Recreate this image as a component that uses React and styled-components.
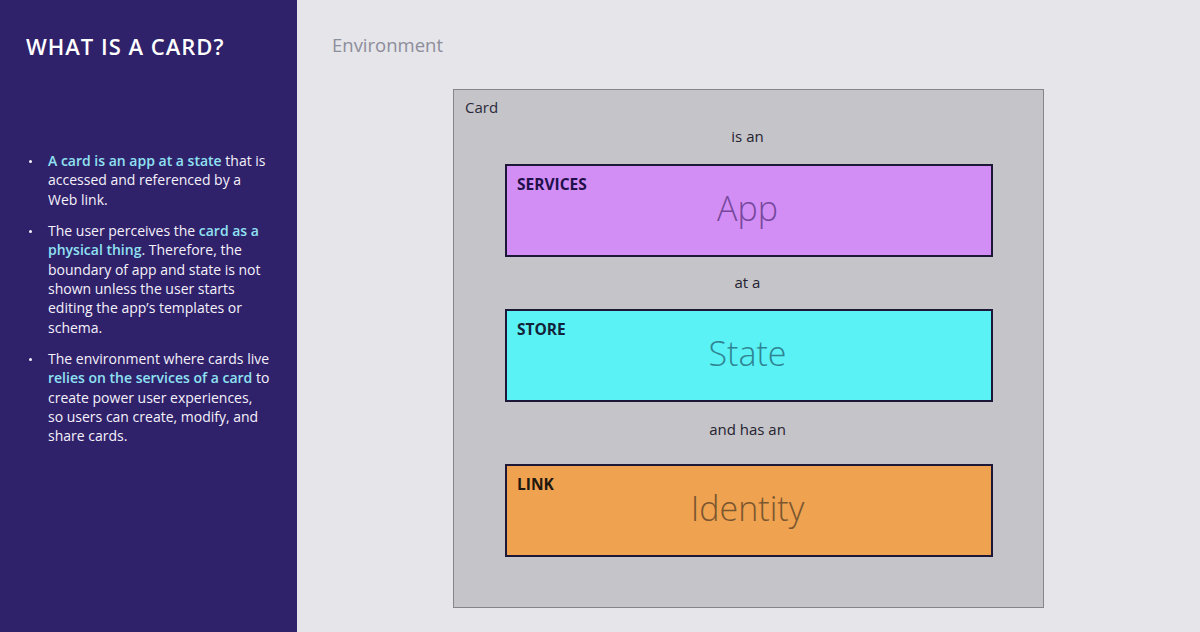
import React from 'react';
import styled, { createGlobalStyle } from 'styled-components';

const Global = createGlobalStyle`
    html, body {
        margin: 0;
        height: 632px;
        overflow: hidden;
        font-family: "Open Sans", "Liberation Sans", sans-serif;
    }
`;

const Page = styled.div`
    display: flex;
    width: 1200px;
    height: 632px;
    background: #e5e5ea;
`;

const Sidebar = styled.aside`
    box-sizing: border-box;
    flex: 0 0 297px;
    padding: 32px 0 0 26px;
    background: #30216b;
    color: #f4f2fa;
`;

const Heading = styled.h1`
    margin: 0 0 90px;
    font-size: 22px;
    line-height: 29px;
    font-weight: 600;
    letter-spacing: 1px;
    color: #fff;
`;

const Points = styled.ul`
    margin: 0;
    padding: 0 0 0 22px;
    list-style: none;
`;

const Point = styled.li`
    position: relative;
    margin-bottom: 11.6px;
    font-size: 14px;
    line-height: 19.4px;
    &::before {
        content: '';
        position: absolute;
        left: -19px;
        top: 9px;
        width: 3px;
        height: 3px;
        border-radius: 50%;
        background: #f4f2fa;
    }
`;

const Mark = styled.span`
    color: #8fe2f2;
    font-weight: 600;
`;

const Main = styled.main`
    flex: 1;
    padding: 32px 0 0 35px;
`;

const Environment = styled.div`
    margin-bottom: 32px;
    font-size: 18.5px;
    line-height: 25px;
    color: #8d8d9b;
`;

const Card = styled.section`
    box-sizing: border-box;
    width: 591px;
    height: 519px;
    margin-left: 121px;
    padding: 6px 50px 0 51px;
    background: #c4c4c9;
    border: 1px solid #85858c;
`;

const CardName = styled.div`
    margin: 0 0 1px -40px;
    font-size: 15px;
    line-height: 22px;
    color: #2c2a3a;
`;

const Joiner = styled.div`
    height: ${p => p.$height}px;
    padding: ${p => p.$top}px 3px 0 0;
    box-sizing: border-box;
    text-align: center;
    font-size: 15px;
    line-height: 20px;
    color: #24222f;
`;

const Layer = styled.div`
    box-sizing: border-box;
    height: 93px;
    padding: 8px 10px 0;
    background: ${p => p.$bg};
    border: 2px solid #1d1838;
`;

const LayerLabel = styled.div`
    font-size: 15.5px;
    line-height: 20px;
    font-weight: 700;
    color: ${p => p.$color};
`;

const LayerTitle = styled.div`
    margin-top: -6px;
    padding-right: 3px;
    text-align: center;
    font-size: 34px;
    line-height: 40px;
    font-weight: 300;
    color: ${p => p.$color};
`;

const layers = [
    { joiner: 'is an', height: 45, top: 7, bg: '#d38ef5', label: 'SERVICES', labelColor: '#21104a', title: 'App', titleColor: '#76489c' },
    { joiner: 'at a', height: 52, top: 15, bg: '#5af2f5', label: 'STORE', labelColor: '#13233a', title: 'State', titleColor: '#2f8492' },
    { joiner: 'and has an', height: 62, top: 17, bg: '#efa24f', label: 'LINK', labelColor: '#21180f', title: 'Identity', titleColor: '#7a5630' },
];

const App = () => {
    return (
        <Page>
            <Global />
            <Sidebar>
                <Heading>WHAT IS A CARD?</Heading>
                <Points>
                    <Point>
                        <Mark>A card is an app at a state</Mark> that is<br />
                        accessed and referenced by a<br />
                        Web link.
                    </Point>
                    <Point>
                        The user perceives the <Mark>card as a<br />
                        physical thing</Mark>. Therefore, the<br />
                        boundary of app and state is not<br />
                        shown unless the user starts<br />
                        editing the app’s templates or<br />
                        schema.
                    </Point>
                    <Point>
                        The environment where cards live<br />
                        <Mark>relies on the services of a card</Mark> to<br />
                        create power user experiences,<br />
                        so users can create, modify, and<br />
                        share cards.
                    </Point>
                </Points>
            </Sidebar>
            <Main>
                <Environment>Environment</Environment>
                <Card>
                    <CardName>Card</CardName>
                    {layers.map(layer => (
                        <React.Fragment key={layer.label}>
                            <Joiner $height={layer.height} $top={layer.top}>{layer.joiner}</Joiner>
                            <Layer $bg={layer.bg}>
                                <LayerLabel $color={layer.labelColor}>{layer.label}</LayerLabel>
                                <LayerTitle $color={layer.titleColor}>{layer.title}</LayerTitle>
                            </Layer>
                        </React.Fragment>
                    ))}
                </Card>
            </Main>
        </Page>
    );
};

export default App;
